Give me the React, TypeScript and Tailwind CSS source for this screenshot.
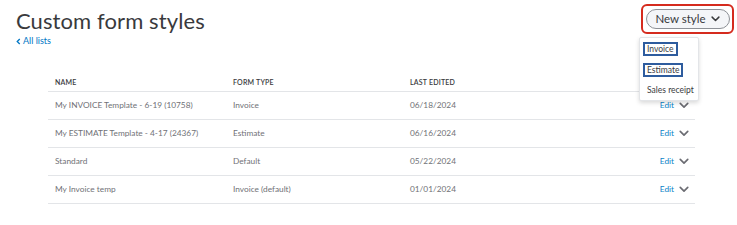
import React from 'react';

type Row = { name: string; type: string; edited: string };

const rows: Row[] = [
  { name: 'My INVOICE Template - 6-19 (10758)', type: 'Invoice', edited: '06/18/2024' },
  { name: 'My ESTIMATE Template - 4-17 (24367)', type: 'Estimate', edited: '06/16/2024' },
  { name: 'Standard', type: 'Default', edited: '05/22/2024' },
  { name: 'My Invoice temp', type: 'Invoice (default)', edited: '01/01/2024' },
];

function Chevron({ className }: { className?: string }) {
  return (
    <svg viewBox="0 0 12 8" className={className} fill="none" stroke="currentColor" strokeWidth={2} strokeLinecap="round" strokeLinejoin="round">
      <path d="M1.5 1.5 6 6l4.5-4.5" />
    </svg>
  );
}

export default function App() {
  return (
    <div className="relative w-[737px] h-[225px] bg-white overflow-hidden font-['Lato',sans-serif] text-[#393a3d]">
      <div className="pl-[16px] pt-[7px]">
        <h1 className="text-[22px] leading-[28px] text-[#393a3d] tracking-[0.1px]">Custom form styles</h1>
        <a className="flex items-center gap-[2px] text-[9px] leading-[10px] text-[#0077c5] mt-[1px]">
          <svg viewBox="0 0 6 8" className="w-[5px] h-[7px]" fill="none" stroke="currentColor" strokeWidth={1.6}>
            <path d="M4.5 1 1.5 4l3 3" />
          </svg>
          All lists
        </a>
      </div>

      <div className="ml-[48px] mt-[28px] w-[647px] text-[8.3px]">
        <div className="grid grid-cols-[178px_177px_1fr_auto] items-center h-[18px] border-b border-[#e3e5e8] px-[7px] text-[7px] font-semibold tracking-[0.2px] text-[#393a3d]">
          <div>NAME</div>
          <div>FORM TYPE</div>
          <div>LAST EDITED</div>
          <div />
        </div>
        {rows.map((r) => (
          <div key={r.name} className="grid grid-cols-[178px_177px_1fr_auto] items-center h-[28px] border-b border-[#e3e5e8] pl-[7px] pr-[6px] text-[#707176]">
            <div>{r.name}</div>
            <div>{r.type}</div>
            <div>{r.edited}</div>
            <div className="flex items-center gap-[5px]">
              <span className="text-[#0a84c8]">Edit</span>
              <Chevron className="w-[10px] h-[7px] text-[#6b6c72]" />
            </div>
          </div>
        ))}
      </div>

      <div className="absolute left-[641px] top-[4px] w-[93px] h-[30px] rounded-[6px] border-2 border-[#d52b1e] flex items-center justify-center">
        <button className="flex items-center gap-[5px] h-[20px] w-[84px] justify-center rounded-full border border-[#8d9096] bg-[#f4f5f8] text-[11.5px] text-[#393a3d]">
          New style
          <Chevron className="w-[9px] h-[6px] text-[#393a3d]" />
        </button>
      </div>

      <div className="absolute left-[639px] top-[37px] w-[60px] h-[64px] bg-white rounded-[2px] border border-[#e3e5e8] shadow-[0_2px_4px_rgba(0,0,0,0.15)] text-[8.5px] text-[#393a3d] flex flex-col pl-[3px] pt-[4px] whitespace-nowrap">
        <div className="self-start border-2 border-[#2e5c9e] px-[2px] h-[14px] flex items-center">Invoice</div>
        <div className="self-start border-2 border-[#2e5c9e] px-[2px] h-[14px] flex items-center mt-[7px]">Estimate</div>
        <div className="px-[4px] h-[14px] flex items-center mt-[6px]">Sales receipt</div>
      </div>
    </div>
  );
}
